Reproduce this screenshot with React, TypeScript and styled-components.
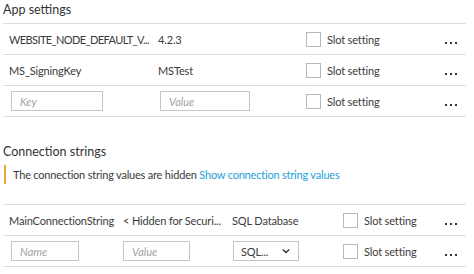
import React, { FC } from 'react';
import styled, { createGlobalStyle } from 'styled-components';

const GlobalStyle = createGlobalStyle`
  body {
    margin: 0;
    background: #fff;
    font-family: Lato, "Open Sans", sans-serif;
    color: #3b3b3b;
  }
`

const appSettings = [
  { name: 'WEBSITE_NODE_DEFAULT_V...', value: '4.2.3', tight: true },
  { name: 'MS_SigningKey', value: 'MSTest', tight: false },
]

const connStrings = [
  { name: 'MainConnectionString', value: '< Hidden for Securi...', type: 'SQL Database' },
]

const App: FC = () => {
  return (
    <Page>
      <GlobalStyle />
      <Title>App settings</Title>
      <Table>
        {appSettings.map((s) => (
          <Row key={s.name} $cols="149px 148px 1fr 14px">
            <Cell $tight={s.tight}>{s.name}</Cell>
            <Cell>{s.value}</Cell>
            <Slot />
            <More />
          </Row>
        ))}
        <Row $cols="149px 148px 1fr 14px">
          <Input $width={92} $shift={2} placeholder="Key" />
          <Input $width={90} $shift={2} placeholder="Value" />
          <Slot />
          <More />
        </Row>
      </Table>

      <Title $top={26}>Connection strings</Title>
      <Notice>
        The connection string values are hidden <Link>Show connection string values</Link>
      </Notice>
      <Table $top={20}>
        {connStrings.map((c) => (
          <Row key={c.name} $cols="114px 109px 111px 1fr 14px">
            <Cell>{c.name}</Cell>
            <Cell>{c.value}</Cell>
            <Cell>{c.type}</Cell>
            <Slot />
            <More />
          </Row>
        ))}
        <Row $cols="114px 109px 111px 1fr 14px">
          <Input $width={68} $shift={2} placeholder="Name" />
          <Input $width={67} placeholder="Value" />
          <Select>
            <span>SQL...</span>
            <Chevron viewBox="0 0 10 6">
              <path d="M1 1 L5 5 L9 1" />
            </Chevron>
          </Select>
          <Slot />
          <More />
        </Row>
      </Table>
    </Page>
  );
};

const Slot: FC = () => (
  <SlotLabel>
    <Box />
    <span>Slot setting</span>
  </SlotLabel>
)

const More: FC = () => (
  <Dots>
    <i />
    <i />
    <i />
  </Dots>
)

export default App;

const Page = styled.div`
  width: 463px;
  padding: 1px 0 0 3px;
`
const Title = styled.h2<{ $top?: number }>`
  margin: ${(p) => p.$top ?? 0}px 0 0;
  height: 22px;
  font-size: 12.5px;
  font-weight: 400;
  line-height: 18px;
  color: #333;
`
const Table = styled.div<{ $top?: number }>`
  margin-top: ${(p) => p.$top ?? 0}px;
  border-top: 1px solid #dedede;
`
const Row = styled.div<{ $cols: string }>`
  display: grid;
  grid-template-columns: ${(p) => p.$cols};
  align-items: center;
  height: 30px;
  padding: 0 7px 0 6px;
  border-bottom: 1px solid #dedede;
  font-size: 11px;
  letter-spacing: -0.15px;
`
const Cell = styled.div<{ $tight?: boolean }>`
  white-space: nowrap;
  overflow: hidden;
  letter-spacing: ${(p) => (p.$tight ? '-0.6px' : 'inherit')};
`
const Input = styled.input<{ $width: number; $shift?: number }>`
  box-sizing: border-box;
  width: ${(p) => p.$width}px;
  height: 20px;
  margin-left: ${(p) => p.$shift ?? 0}px;
  padding: 0 8px;
  border: 1px solid #c6c6c6;
  font-family: inherit;
  font-size: 11px;
  outline: none;
  &::placeholder {
    color: #a3a3a3;
    font-style: italic;
  }
`
const Select = styled.div`
  box-sizing: border-box;
  display: flex;
  align-items: center;
  justify-content: space-between;
  width: 66px;
  height: 20px;
  margin-left: 1px;
  padding: 0 8px 0 7px;
  border: 1px solid #c6c6c6;
  font-size: 11px;
`
const Chevron = styled.svg`
  width: 8px;
  height: 6px;
  fill: none;
  stroke: #333;
  stroke-width: 1.8;
`
const SlotLabel = styled.label`
  display: flex;
  align-items: center;
  gap: 6px;
`
const Box = styled.span`
  box-sizing: border-box;
  width: 15px;
  height: 15px;
  border: 1px solid #b8b8b8;
  background: #fff;
`
const Dots = styled.div`
  display: flex;
  gap: 3px;
  align-self: center;
  margin-top: 8px;
  i {
    width: 2px;
    height: 2px;
    background: #333;
  }
`
const Notice = styled.div`
  margin: 0 0 0 1px;
  padding-left: 7px;
  height: 19px;
  line-height: 19px;
  border-left: 2px solid #e7a640;
  font-size: 11px;
  letter-spacing: -0.2px;
  color: #3b3b3b;
`
const Link = styled.span`
  color: #1e9fd8;
`
